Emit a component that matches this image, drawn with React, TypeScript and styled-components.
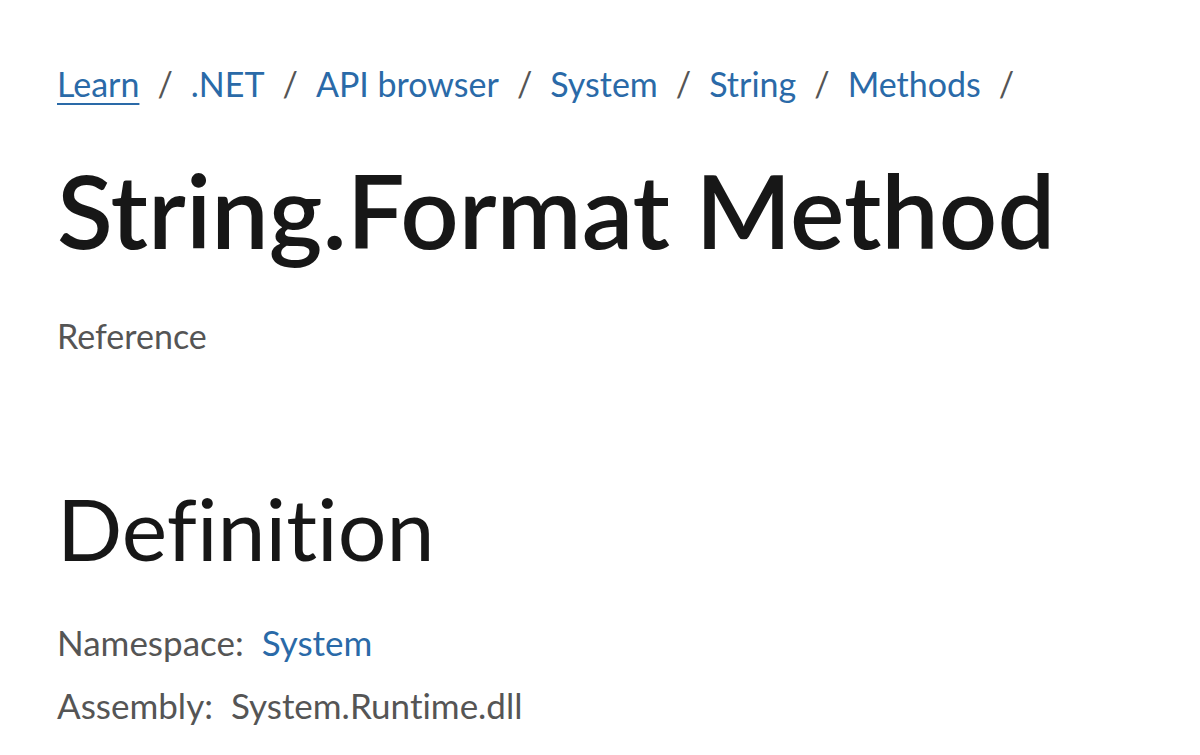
import React from "react";
import styled, { createGlobalStyle } from "styled-components";

const Global = createGlobalStyle`
  html, body { margin: 0; padding: 0; background: #ffffff; }
  body {
    font-family: "Lato", "Noto Sans", sans-serif;
    color: #171717;
    font-variant-ligatures: none;
    font-feature-settings: "liga" 0, "clig" 0;
  }
  * { box-sizing: border-box; }
`;

const Page = styled.main`
  width: 1200px;
  height: 755px;
  overflow: hidden;
  padding: 61px 0 0 57px;
  display: flex;
  flex-direction: column;
`;

const Breadcrumbs = styled.nav`
  display: flex;
  align-items: baseline;
  flex-wrap: nowrap;
  font-size: 34px;
  line-height: 46px;
  white-space: nowrap;
`;

const Crumb = styled.a<{ $underline?: boolean }>`
  color: #2a6aa8;
  text-decoration: ${(p) => (p.$underline ? "underline" : "none")};
  text-decoration-thickness: 2px;
  text-underline-offset: 6px;
`;

const Sep = styled.span`
  color: #555555;
  margin: 0 18px;
`;

const Title = styled.h1`
  margin: 43px 0 0;
  font-size: 102.5px;
  line-height: 120px;
  font-weight: 600;
  color: #171717;
  white-space: nowrap;
`;

const Subtitle = styled.div`
  margin: 44px 0 0;
  font-size: 34px;
  line-height: 44px;
  color: #555555;
`;

const H2 = styled.h2`
  margin: 119px 0 0;
  font-size: 86px;
  line-height: 102px;
  font-weight: 400;
  color: #171717;
`;

const MetaRow = styled.div<{ $gap?: number }>`
  margin-top: ${(p) => p.$gap ?? 20}px;
  font-size: 35px;
  line-height: 44px;
  color: #555555;
  display: flex;
  gap: 18px;
  white-space: nowrap;
`;

const MetaLink = styled.a`
  color: #2a6aa8;
  text-decoration: none;
`;

const MetaValue = styled.span`
  color: #555555;
`;

const crumbs = [".NET", "API browser", "System", "String", "Methods"];

export default function App() {
  return (
    <>
      <Global />
      <Page>
        <Breadcrumbs>
          <Crumb href="#" $underline>Learn</Crumb>
          {crumbs.map((c) => (
            <React.Fragment key={c}>
              <Sep>/</Sep>
              <Crumb href="#">{c}</Crumb>
            </React.Fragment>
          ))}
          <Sep>/</Sep>
        </Breadcrumbs>
        <Title>String.Format Method</Title>
        <Subtitle>Reference</Subtitle>
        <H2>Definition</H2>
        <MetaRow $gap={41}>
          <span>Namespace:</span>
          <MetaLink href="#">System</MetaLink>
        </MetaRow>
        <MetaRow $gap={19}>
          <span>Assembly:</span>
          <MetaValue>System.Runtime.dll</MetaValue>
        </MetaRow>
      </Page>
    </>
  );
}
